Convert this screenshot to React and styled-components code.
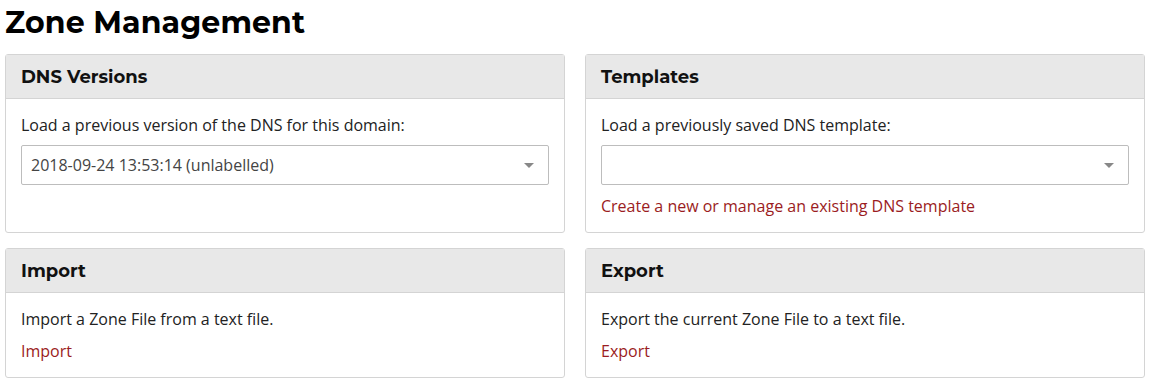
import styled, { createGlobalStyle } from "styled-components";

const GlobalStyle = createGlobalStyle`
    body {
        margin: 0;
        background: #fff;
        font-family: "Open Sans", "Liberation Sans", sans-serif;
        color: #222;
    }
`;

const panels = [
    {
        title: "DNS Versions",
        text: "Load a previous version of the DNS for this domain:",
        select: "2018-09-24 13:53:14 (unlabelled)",
    },
    {
        title: "Templates",
        text: "Load a previously saved DNS template:",
        select: "",
        link: "Create a new or manage an existing DNS template",
    },
    {
        title: "Import",
        text: "Import a Zone File from a text file.",
        link: "Import",
    },
    {
        title: "Export",
        text: "Export the current Zone File to a text file.",
        link: "Export",
    },
];

const App = () => {
    return (
        <>
            <GlobalStyle />
            <Page>
                <Title>Zone Management</Title>
                <PanelGrid>
                    {panels.map((panel) => (
                        <Panel key={panel.title}>
                            <PanelHeader>{panel.title}</PanelHeader>
                            <PanelBody>
                                <PanelText>{panel.text}</PanelText>
                                {panel.select !== undefined && (
                                    <Select>
                                        <span>{panel.select}</span>
                                        <Caret />
                                    </Select>
                                )}
                                {panel.link && (
                                    <PanelLink href="#">{panel.link}</PanelLink>
                                )}
                            </PanelBody>
                        </Panel>
                    ))}
                </PanelGrid>
            </Page>
        </>
    );
};

const Page = styled.div`
    padding: 0 7px 0 5px;
`;

const Title = styled.h1`
    font-family: "Montserrat", "Inter", "Lato", sans-serif;
    font-size: 30px;
    font-weight: 700;
    line-height: 36px;
    color: #000;
    margin: 5px 0 13px;
    letter-spacing: 0.1px;
`;

const PanelGrid = styled.div`
    display: grid;
    grid-template-columns: 560px 560px;
    column-gap: 20px;
    row-gap: 15px;
`;

const Panel = styled.section`
    border: 1px solid #d4d4d4;
    border-radius: 3px;
    background: #fff;
    display: flex;
    flex-direction: column;
`;

const PanelHeader = styled.h2`
    margin: 0;
    height: 43px;
    display: flex;
    align-items: center;
    padding: 0 15px;
    background: #e8e8e8;
    border-bottom: 1px solid #d4d4d4;
    font-family: "Montserrat", "Inter", "Lato", sans-serif;
    font-size: 18px;
    font-weight: 700;
    color: #111;
`;

const PanelBody = styled.div`
    padding: 14px 15px 14px;
    display: flex;
    flex-direction: column;
    gap: 8px;
`;

const PanelText = styled.p`
    margin: 0;
    font-size: 16px;
    line-height: 24px;
    color: #222;
`;

const Select = styled.div`
    height: 38px;
    border: 1px solid #bdbdbd;
    border-radius: 2px;
    display: flex;
    align-items: center;
    justify-content: space-between;
    padding: 0 14px 0 9px;
    font-size: 16px;
    color: #444;
    margin-bottom: 1px;
`;

const Caret = styled.span`
    width: 0;
    height: 0;
    border-left: 5px solid transparent;
    border-right: 5px solid transparent;
    border-top: 5px solid #888;
`;

const PanelLink = styled.a`
    font-size: 16px;
    line-height: 24px;
    color: #9b1c22;
    text-decoration: none;
`;

export default App;
